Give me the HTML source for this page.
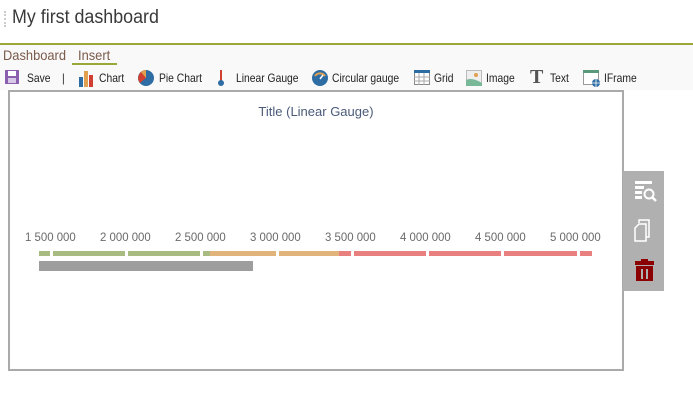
<!DOCTYPE html>
<html><head><style>
body{margin:0;width:693px;height:400px;background:#fff;font-family:"Liberation Sans",sans-serif;position:relative;overflow:hidden}
.a{position:absolute}
.tb span{position:absolute;top:71px;font-size:12px;color:#222;transform:scaleX(.86);transform-origin:left}
.ax{position:absolute;top:230px;font-size:12px;color:#6a6a6a;transform:scaleX(.95);transform-origin:left}
.s{position:absolute;top:251px;height:5px}
</style></head><body>
<div class="a" style="left:4px;top:11px;width:2px;height:16px;border-left:2px dotted #ccc"></div>
<div class="a" style="left:12px;top:7px;font-size:19px;color:#3a3a3a;transform:scaleX(.94);transform-origin:left">My first dashboard</div>
<div class="a" style="left:0;top:43px;width:693px;height:2px;background:#9aa83a"></div>
<div class="a" style="left:0;top:45px;width:693px;height:45px;background:#f9f9f9"></div>
<div class="a" style="left:3px;top:47px;font-size:14px;color:#7a5a4a;transform:scaleX(.92);transform-origin:left">Dashboard</div>
<div class="a" style="left:78px;top:47px;font-size:14px;color:#7a5a4a;transform:scaleX(.92);transform-origin:left">Insert</div>
<div class="a" style="left:72px;top:63px;width:45px;height:2px;background:#9aa83a"></div>
<div class="tb">
<svg class="a" style="left:4px;top:69px" width="16" height="16"><rect x="1" y="1" width="14" height="14" fill="#8a5fb0"/><rect x="4" y="2" width="8" height="5" fill="#fff"/><rect x="4" y="9" width="8" height="5" fill="#d8c8e8"/></svg>
<span style="left:27px">Save</span><span style="left:62px">|</span>
<svg class="a" style="left:79px;top:69px" width="16" height="18"><rect x="0" y="8" width="4" height="10" fill="#2e6da4"/><rect x="5" y="2" width="4" height="16" fill="#e0a050"/><rect x="10" y="6" width="4" height="12" fill="#d04030"/></svg>
<span style="left:99px">Chart</span>
<svg class="a" style="left:138px;top:70px" width="16" height="16"><circle cx="8" cy="8" r="8" fill="#2e6da4"/><path d="M8 8L8 0A8 8 0 0 0 2 13Z" fill="#d04030"/><path d="M8 8L8 0A8 8 0 0 0 3 2Z" fill="#e0a050"/></svg>
<span style="left:159px">Pie Chart</span>
<svg class="a" style="left:217px;top:69px" width="8" height="18"><rect x="3" y="1" width="2" height="11" fill="#d04030"/><circle cx="4" cy="14" r="3" fill="#2e6da4"/></svg>
<span style="left:236px">Linear Gauge</span>
<svg class="a" style="left:312px;top:70px" width="16" height="16"><circle cx="8" cy="8" r="8" fill="#2e6da4"/><path d="M3 6A6 6 0 0 1 13 6" stroke="#e0a050" stroke-width="2" fill="none"/><line x1="8" y1="9" x2="11" y2="5" stroke="#fff" stroke-width="1.5"/></svg>
<span style="left:332px">Circular gauge</span>
<svg class="a" style="left:414px;top:70px" width="16" height="15"><rect x=".5" y=".5" width="15" height="14" fill="#fff" stroke="#888"/><rect x="0" y="0" width="16" height="3" fill="#2e6da4"/><path d="M5 3V15M10 3V15M0 7H16M0 11H16" stroke="#aaa"/></svg>
<span style="left:434px">Grid</span>
<svg class="a" style="left:466px;top:70px" width="16" height="16"><rect x=".5" y=".5" width="15" height="15" fill="#eee" stroke="#bbb"/><circle cx="10" cy="5" r="2" fill="#e0a050"/><path d="M0 16L0 10Q6 7 16 13V16Z" fill="#7ab89a"/></svg>
<span style="left:486px">Image</span>
<div class="a" style="left:530px;top:66px;font-family:'Liberation Serif',serif;font-size:20px;font-weight:bold;color:#555">T</div>
<span style="left:550px">Text</span>
<svg class="a" style="left:583px;top:70px" width="18" height="18"><rect x=".5" y=".5" width="15" height="14" fill="#fff" stroke="#999"/><rect x="0" y="0" width="16" height="3" fill="#5a9a7a"/><circle cx="13" cy="13" r="4" fill="#2e6da4"/><path d="M9 13H17M13 9V17" stroke="#fff" stroke-width=".8"/></svg>
<span style="left:604px">IFrame</span>
</div>
<div class="a" style="left:8px;top:90px;width:612px;height:277px;border:2px solid #aaa"></div>
<div class="a" style="left:0;top:104px;width:632px;text-align:center;font-size:13px;color:#4a5a7a">Title (Linear Gauge)</div>
<div class="ax" style="left:25px">1 500 000</div><div class="ax" style="left:100px">2 000 000</div><div class="ax" style="left:175px">2 500 000</div><div class="ax" style="left:250px">3 000 000</div><div class="ax" style="left:325px">3 500 000</div><div class="ax" style="left:400px">4 000 000</div><div class="ax" style="left:475px">4 500 000</div><div class="ax" style="left:550px">5 000 000</div>
<div class="s" style="left:39px;width:11px;background:#a8bb80"></div>
<div class="s" style="left:53px;width:72px;background:#a8bb80"></div>
<div class="s" style="left:128px;width:72px;background:#a8bb80"></div>
<div class="s" style="left:203px;width:7px;background:#a8bb80"></div>
<div class="s" style="left:210px;width:66px;background:#e0b47a"></div>
<div class="s" style="left:279px;width:60px;background:#e0b47a"></div>
<div class="s" style="left:339px;width:12px;background:#e88080"></div>
<div class="s" style="left:354px;width:72px;background:#e88080"></div>
<div class="s" style="left:429px;width:72px;background:#e88080"></div>
<div class="s" style="left:504px;width:73px;background:#e88080"></div>
<div class="s" style="left:580px;width:12px;background:#e88080"></div>
<div class="a" style="left:39px;top:261px;width:214px;height:10px;background:#9e9e9e"></div>
<div class="a" style="left:623px;top:171px;width:41px;height:120px;background:#b0b0b0"></div>
<svg class="a" style="left:634px;top:180px" width="24" height="24"><rect x="1" y="1" width="17" height="3" fill="#fff"/><rect x="1" y="6" width="9" height="3" fill="#fff"/><rect x="1" y="11" width="7" height="3" fill="#fff"/><rect x="1" y="16" width="7" height="3" fill="#fff"/><circle cx="15" cy="14" r="4.5" fill="none" stroke="#fff" stroke-width="2"/><line x1="18" y1="17" x2="22" y2="21" stroke="#fff" stroke-width="2.5"/></svg>
<svg class="a" style="left:634px;top:218px" width="22" height="24"><path d="M5 5V2H15V19H12" fill="none" stroke="#fff" stroke-width="1.5"/><path d="M1 10L5 6H12V23H1Z" fill="none" stroke="#fff" stroke-width="1.5"/></svg>
<svg class="a" style="left:634px;top:258px" width="22" height="24"><rect x="7" y="1" width="7" height="3" fill="#8b0000"/><rect x="1" y="3" width="19" height="4" fill="#8b0000"/><rect x="2" y="8" width="17" height="15" fill="#8b0000"/><rect x="7" y="11" width="2" height="10" fill="#b0b0b0"/><rect x="12" y="11" width="2" height="10" fill="#b0b0b0"/></svg>
</body></html>
